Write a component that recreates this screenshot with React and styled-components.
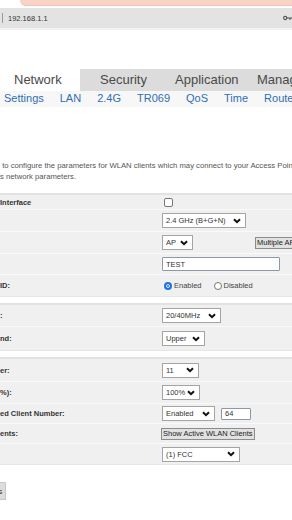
import React from "react";
import styled, { createGlobalStyle } from "styled-components";

const GlobalStyle = createGlobalStyle`
  html, body {
    margin: 0;
    padding: 0;
    background: #ffffff;
  }
  body {
    width: 292px;
    height: 520px;
    overflow: hidden;
    font-family: "Liberation Sans", Arial, sans-serif;
  }
`;

const Page = styled.div`
  width: 292px;
  overflow: hidden;
`;

const TopStrip = styled.div`
  height: 6px;
  display: flex;
`;
const StripBlank = styled.div`
  width: 20px;
`;
const StripPink = styled.div`
  flex: 1;
  background: #f8d3c6;
  border-bottom: 1px solid #f2c2b2;
  border-bottom-left-radius: 6px;
`;

const AddressBar = styled.div`
  margin-top: 2px;
  height: 20px;
  background: #e3e3e3;
  display: flex;
  align-items: center;
  padding: 0 0 0 2px;
  border-bottom: 2px solid #f2f2f2;
`;
const Separator = styled.div`
  width: 1px;
  height: 10px;
  background: #9a9a9a;
  margin-right: 5px;
`;
const Url = styled.span`
  flex: 1;
  font-size: 7.5px;
  color: #333;
`;

const TabBar = styled.div`
  margin-top: 39px;
  height: 22px;
  display: flex;
  background: #dcdcdc;
`;
const Tab = styled.div`
  width: ${(p) => p.$w}px;
  flex: none;
  padding-left: ${(p) => p.$pad}px;
  box-sizing: border-box;
  background: ${(p) => (p.$active ? "#ffffff" : "transparent")};
  color: #4a4a4a;
  font-size: 13px;
  line-height: 22px;
  white-space: nowrap;
`;

const SubBar = styled.div`
  height: 16px;
  display: flex;
  gap: 16px;
  padding-left: 4px;
  background: #f7f7f7;
  white-space: nowrap;
`;
const SubLink = styled.span`
  color: #2f6eb6;
  font-size: 11px;
  line-height: 14px;
  flex: none;
`;

const Description = styled.p`
  margin: 53px 0 0 0;
  font-size: 7.7px;
  line-height: 11px;
  color: #555;
  white-space: nowrap;
`;

const Tables = styled.div`
  margin-top: 11px;
  display: flex;
  flex-direction: column;
  gap: 6px;
`;
const Table = styled.div`
  border-top: 2px solid #e2e2e2;
  border-bottom: 1px solid #e6e6e6;
`;
const Row = styled.div`
  display: flex;
  align-items: center;
  height: ${(p) => p.$h}px;
  box-sizing: border-box;
  background: #f0f0f0;
  border-bottom: 1px solid #fafafa;
  &:last-child {
    border-bottom: none;
  }
`;
const Label = styled.div`
  width: 162px;
  flex: none;
  font-size: 7.5px;
  font-weight: bold;
  color: #333;
  white-space: nowrap;
`;
const Field = styled.div`
  flex: 1;
  display: flex;
  align-items: center;
  gap: 6px;
  white-space: nowrap;
  font-size: 7.5px;
  color: #333;
`;

const Checkbox = styled.span`
  width: 7px;
  height: 7px;
  border: 1px solid #777;
  border-radius: 2px;
  background: #fff;
  margin-left: 2px;
`;

const SelectBox = styled.div`
  width: ${(p) => p.$w}px;
  height: 15px;
  box-sizing: border-box;
  border: 1px solid #a4a4a4;
  background: #fff;
  display: flex;
  align-items: center;
  justify-content: space-between;
  padding: 0 4px 0 3px;
  font-size: 7.5px;
  color: #333;
  flex: none;
`;

const TextBox = styled.div`
  width: ${(p) => p.$w}px;
  height: ${(p) => p.$h}px;
  box-sizing: border-box;
  border: 1px solid #8d99a8;
  border-radius: 1px;
  background: #fff;
  padding: 0 3px;
  display: flex;
  align-items: center;
  font-size: 7.5px;
  color: #333;
  flex: none;
`;

const Button = styled.div`
  height: 12px;
  box-sizing: border-box;
  border: 1px solid #8c8c8c;
  background: #e1e1e1;
  font-size: 7.5px;
  color: #222;
  padding: 0 1px;
  display: flex;
  align-items: center;
  flex: none;
  margin-left: ${(p) => p.$ml || 0}px;
`;

const Radio = styled.span`
  width: 8px;
  height: 8px;
  box-sizing: border-box;
  border-radius: 50%;
  border: ${(p) => (p.$on ? "2px solid #1a73e8" : "1px solid #777")};
  background: ${(p) => (p.$on ? "#1a73e8" : "#fff")};
  box-shadow: ${(p) => (p.$on ? "inset 0 0 0 1px #fff" : "none")};
  margin-right: 2px;
  flex: none;
`;
const RadioItem = styled.span`
  display: flex;
  align-items: center;
  margin-left: 2px;
  margin-right: 4px;
  color: #444;
`;

const Footer = styled.div`
  margin-top: 17px;
  display: flex;
`;
const ApplyButton = styled.div`
  height: 16px;
  padding: 0 3px;
  margin-left: -56px;
  background: #dcdcdc;
  border: 1px solid #c8c8c8;
  font-size: 8px;
  color: #333;
  display: flex;
  align-items: center;
  white-space: nowrap;
`;

const Chevron = () => (
  <svg width="8" height="6" viewBox="0 0 8 6">
    <polyline points="1,1.2 4,4.2 7,1.2" fill="none" stroke="#111" strokeWidth="2" />
  </svg>
);

const KeyIcon = () => (
  <svg width="9" height="6" viewBox="0 0 9 6">
    <circle cx="2.2" cy="3" r="1.6" fill="none" stroke="#555" strokeWidth="1.1" />
    <line x1="3.8" y1="3" x2="9" y2="3" stroke="#555" strokeWidth="1.1" />
    <line x1="7" y1="3" x2="7" y2="5" stroke="#555" strokeWidth="1" />
  </svg>
);

const Select = ({ w, children }) => (
  <SelectBox $w={w}>
    <span>{children}</span>
    <Chevron />
  </SelectBox>
);

export default function App() {
  return (
    <Page>
      <GlobalStyle />
      <TopStrip>
        <StripBlank />
        <StripPink />
      </TopStrip>
      <AddressBar>
        <Separator />
        <Url>192.168.1.1</Url>
        <KeyIcon />
      </AddressBar>

      <TabBar>
        <Tab $active $w={80} $pad={14}>Network</Tab>
        <Tab $w={75} $pad={20}>Security</Tab>
        <Tab $w={102} $pad={20}>Application</Tab>
        <Tab $w={60} $pad={0}>Management</Tab>
      </TabBar>
      <SubBar>
        <SubLink>Settings</SubLink>
        <SubLink>LAN</SubLink>
        <SubLink>2.4G</SubLink>
        <SubLink>TR069</SubLink>
        <SubLink>QoS</SubLink>
        <SubLink>Time</SubLink>
        <SubLink>Router</SubLink>
      </SubBar>

      <Description>
        &nbsp;to configure the parameters for WLAN clients which may connect to your Access Point.
        <br />s network parameters.
      </Description>

      <Tables>
        <Table>
          <Row $h={15}>
            <Label>Interface</Label>
            <Field>
              <Checkbox />
            </Field>
          </Row>
          <Row $h={22}>
            <Label />
            <Field>
              <Select w={84}>2.4 GHz (B+G+N)</Select>
            </Field>
          </Row>
          <Row $h={22}>
            <Label />
            <Field>
              <Select w={31}>AP</Select>
              <Button $ml={56}>Multiple AP</Button>
            </Field>
          </Row>
          <Row $h={21}>
            <Label />
            <Field>
              <TextBox $w={118} $h={14}>TEST</TextBox>
            </Field>
          </Row>
          <Row $h={21}>
            <Label>ID:</Label>
            <Field>
              <RadioItem>
                <Radio $on />
                Enabled
              </RadioItem>
              <RadioItem>
                <Radio />
                Disabled
              </RadioItem>
            </Field>
          </Row>
        </Table>

        <Table>
          <Row $h={22}>
            <Label>:</Label>
            <Field>
              <Select w={59}>20/40MHz</Select>
            </Field>
          </Row>
          <Row $h={23}>
            <Label>nd:</Label>
            <Field>
              <Select w={43}>Upper</Select>
            </Field>
          </Row>
        </Table>

        <Table>
          <Row $h={23}>
            <Label>er:</Label>
            <Field>
              <Select w={37}>11</Select>
            </Field>
          </Row>
          <Row $h={22}>
            <Label>%):</Label>
            <Field>
              <Select w={38}>100%</Select>
            </Field>
          </Row>
          <Row $h={20}>
            <Label>ed Client Number:</Label>
            <Field>
              <Select w={53}>Enabled</Select>
              <TextBox $w={30} $h={12}>64</TextBox>
            </Field>
          </Row>
          <Row $h={20}>
            <Label>ents:</Label>
            <Field>
              <Button $ml={-1}>Show Active WLAN Clients</Button>
            </Field>
          </Row>
          <Row $h={20}>
            <Label />
            <Field>
              <Select w={78}>(1) FCC</Select>
            </Field>
          </Row>
        </Table>
      </Tables>

      <Footer>
        <ApplyButton>Apply Changes</ApplyButton>
      </Footer>
    </Page>
  );
}
